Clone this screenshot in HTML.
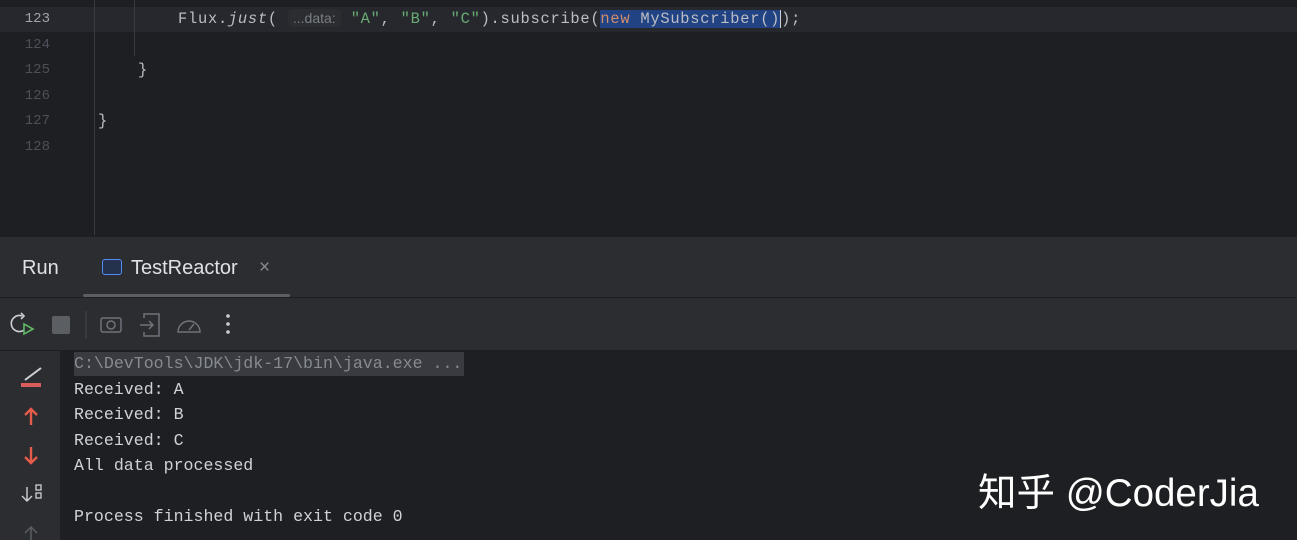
<!DOCTYPE html>
<html><head><meta charset="utf-8"><style>
*{margin:0;padding:0;box-sizing:border-box}
body{width:1297px;height:540px;background:#1e1f22;position:relative;overflow:hidden;font-family:"Liberation Sans",sans-serif}
.ab{position:absolute}
.mono{font-family:"Liberation Mono","DejaVu Sans Mono",monospace;white-space:pre}
.ln{position:absolute;left:0;width:50px;text-align:right;color:#4b5059;font-size:14px;font-family:"Liberation Mono",monospace}
.code{font-size:15.4px;color:#bcbec4;letter-spacing:0.75px}
.out{position:absolute;left:74px;font-size:16.6px;color:#d0d2d6;font-family:"Liberation Mono",monospace;white-space:pre}
</style></head><body>
<div class="ab" style="left:0;top:7px;width:1297px;height:25px;background:#26282e"></div>
<div class="ab" style="left:94px;top:0;width:1px;height:235px;background:#393b40"></div>
<div class="ab" style="left:134px;top:0;width:1px;height:56px;background:#393b40"></div>
<div class="ln" style="top:11px;color:#a1a3ab">123</div>
<div class="ln" style="top:37px">124</div>
<div class="ln" style="top:62px">125</div>
<div class="ln" style="top:88px">126</div>
<div class="ln" style="top:113px">127</div>
<div class="ln" style="top:139px">128</div>
<div class="ab mono code" style="left:178px;top:10px">Flux.<i>just</i>( <span style="font-family:'Liberation Sans',sans-serif;font-size:14px;color:#7a7e85;background:#2b2d30;border-radius:4px;padding:1px 5px;letter-spacing:0">...data:</span> <span style="color:#6aab73">"A"</span>, <span style="color:#6aab73">"B"</span>, <span style="color:#6aab73">"C"</span>).subscribe(<span style="background:#214283"><span style="color:#cf8e6d">new</span> MySubscriber()</span><span style="border-left:1px solid #ced0d6">)</span>;</div>
<div class="ab mono code" style="left:138px;top:61px">}</div>
<div class="ab mono code" style="left:98px;top:112px">}</div>
<div class="ab" style="left:0;top:236px;width:1297px;height:115px;background:#2b2d30;border-top:1px solid #1e1f22"></div>
<div class="ab" style="left:22px;top:257px;font-size:20px;color:#dfe1e5">Run</div>
<div class="ab" style="left:102px;top:259px;width:20px;height:16px;border:1.5px solid #548af7;border-radius:3px;background:#25324d"></div>
<div class="ab" style="left:131px;top:257px;font-size:20px;color:#dfe1e5">TestReactor</div>
<div class="ab" style="left:259px;top:257px;font-size:19px;color:#868a91">×</div>
<div class="ab" style="left:83px;top:294px;width:207px;height:3px;background:#5b5e63;border-radius:2px"></div>
<div class="ab" style="left:0;top:297px;width:1297px;height:1px;background:#1e1f22"></div>
<svg class="ab" style="left:8px;top:310px" width="240" height="30" viewBox="0 0 240 30">
<path d="M14 6 A8 8 0 1 0 16 20" fill="none" stroke="#ced0d6" stroke-width="1.6"/><path d="M13 3 L16 6 L13 9" fill="none" stroke="#ced0d6" stroke-width="1.6"/>
<path d="M16 14 L25 19 L16 24 Z" fill="none" stroke="#5fb865" stroke-width="1.6"/>
<rect x="44" y="6" width="18" height="18" rx="2" fill="#5b5e63"/>
<line x1="78" y1="1" x2="78" y2="29" stroke="#43454a"/>
<rect x="93" y="8" width="20" height="14" rx="2" fill="none" stroke="#6f737a" stroke-width="1.5"/><circle cx="103" cy="15" r="4" fill="none" stroke="#6f737a" stroke-width="1.5"/>
<path d="M136 8 V4 H151 V26 H136 V22 M132 15 H145 M141 11 L145 15 L141 19" fill="none" stroke="#6f737a" stroke-width="1.5"/>
<path d="M170 22 A11 11 0 1 1 192 22 Z" fill="none" stroke="#6f737a" stroke-width="1.5"/><line x1="181" y1="20" x2="186" y2="14" stroke="#6f737a" stroke-width="1.5"/>
<circle cx="220" cy="6" r="1.8" fill="#ced0d6"/><circle cx="220" cy="14" r="1.8" fill="#ced0d6"/><circle cx="220" cy="22" r="1.8" fill="#ced0d6"/>
</svg>
<div class="ab" style="left:0;top:350px;width:1297px;height:1px;background:#1e1f22"></div>
<div class="ab" style="left:0;top:351px;width:60px;height:189px;background:#2b2d30"></div>
<svg class="ab" style="left:15px;top:365px" width="35" height="175" viewBox="0 0 35 175">
<rect x="6" y="18" width="20" height="4" fill="#db5c5c"/><path d="M10 15 L26 3" stroke="#ced0d6" stroke-width="2"/>
<path d="M16 60 V44 M10 50 L16 44 L22 50" fill="none" stroke="#e55b49" stroke-width="2.4"/>
<path d="M16 82 V98 M10 92 L16 98 L22 92" fill="none" stroke="#e55b49" stroke-width="2.4"/>
<path d="M12 122 V136 M7 131 L12 136 L17 131" fill="none" stroke="#ced0d6" stroke-width="1.4"/>
<rect x="21" y="120" width="5" height="5" fill="none" stroke="#ced0d6" stroke-width="1.3"/><rect x="21" y="128" width="5" height="5" fill="none" stroke="#ced0d6" stroke-width="1.3"/>
<path d="M16 175 V162 M10 168 L16 162 L22 168" fill="none" stroke="#5b5e63" stroke-width="1.5"/>
</svg>
<div class="ab" style="left:74px;top:352px;width:390px;height:24px;background:#393b40"></div>
<div class="out" style="top:354px;color:#868a91">C:\DevTools\JDK\jdk-17\bin\java.exe ...</div>
<div class="out" style="top:380px">Received: A</div>
<div class="out" style="top:405px">Received: B</div>
<div class="out" style="top:431px">Received: C</div>
<div class="out" style="top:456px">All data processed</div>
<div class="out" style="top:507px">Process finished with exit code 0</div>
<div class="ab" style="left:978px;top:462px;font-size:38.5px;color:#fff;font-family:'Liberation Sans','Noto Sans CJK SC',sans-serif;white-space:nowrap">知乎 @CoderJia</div>
</body></html>
